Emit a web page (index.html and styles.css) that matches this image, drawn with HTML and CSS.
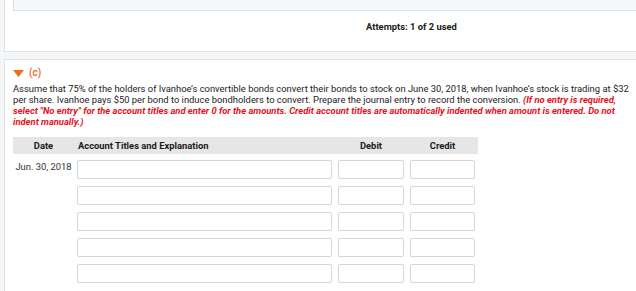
FILE: index.html
```html
<!DOCTYPE html>
<html lang="en">
<head>
  <meta charset="UTF-8">
  <title>Journal Entry</title>
  <link rel="stylesheet" href="styles.css">
</head>
<body>

  <div class="card card-top">
    <div class="prev-box"></div>
    <div class="attempts">Attempts: 1 of 2 used</div>
  </div>

  <div class="card">
    <div class="part-head">
      <svg class="caret" width="11" height="7" viewBox="0 0 11 7"><polygon points="0,0 11,0 5.5,7" fill="#ef6c1f"/></svg>
      <span class="part-label">(c)</span>
    </div>
    <p class="question">
      Assume that 75% of the holders of Ivanhoe’s convertible bonds convert their bonds to stock on June 30, 2018, when Ivanhoe’s stock is trading at $32 per share. Ivanhoe pays $50 per bond to induce bondholders to convert. Prepare the journal entry to record the conversion.
      <span class="note">(If no entry is required, select "No entry" for the account titles and enter 0 for the amounts. Credit account titles are automatically indented when amount is entered. Do not indent manually.)</span>
    </p>

    <div class="journal">
      <div class="jrow jhead">
        <div class="c-date">Date</div>
        <div class="c-title">Account Titles and Explanation</div>
        <div class="c-debit">Debit</div>
        <div class="c-credit">Credit</div>
      </div>
      <div class="jrow">
        <div class="c-date date-val">Jun. 30, 2018</div>
        <input class="c-title" type="text">
        <input class="c-debit" type="text">
        <input class="c-credit" type="text">
      </div>
      <div class="jrow">
        <div class="c-date"></div>
        <input class="c-title" type="text">
        <input class="c-debit" type="text">
        <input class="c-credit" type="text">
      </div>
      <div class="jrow">
        <div class="c-date"></div>
        <input class="c-title" type="text">
        <input class="c-debit" type="text">
        <input class="c-credit" type="text">
      </div>
      <div class="jrow">
        <div class="c-date"></div>
        <input class="c-title" type="text">
        <input class="c-debit" type="text">
        <input class="c-credit" type="text">
      </div>
      <div class="jrow">
        <div class="c-date"></div>
        <input class="c-title" type="text">
        <input class="c-debit" type="text">
        <input class="c-credit" type="text">
      </div>
    </div>
  </div>

</body>
</html>
```

FILE: styles.css
```css
body {
  margin: 0;
  background-color: #f3f5f7;
  font-family: Roboto, "Liberation Sans", sans-serif;
  font-size: 9.4px;
  color: #222;
  overflow: hidden;
}

.card {
  margin-left: 4px;
  padding-left: 8px;
  background-color: white;
  border: 1px solid #dde2e7;
  border-right: none;
}

.card-top {
  border-top: none;
}

.prev-box {
  height: 10px;
  background-color: #f5f8fa;
  border-left: 1px solid #dde2e7;
  border-bottom: 1px solid #dde2e7;
}

.attempts {
  height: 30px;
  padding: 10px 0 0 353px;
  line-height: 12px;
  font-weight: bold;
  color: #1a1a1a;
}

.card-top + .card {
  margin-top: 7px;
  padding-top: 7px;
  height: 260px;
}

.part-head {
  display: flex;
  align-items: center;
  height: 12px;
  line-height: 12px;
}

.caret {
  margin-top: 1px;
}

.part-label {
  margin-left: 5px;
  color: #e8661d;
  font-size: 10px;
  font-weight: 500;
}

.question {
  margin: 4px 0 0;
  padding-right: 2px;
  line-height: 11px;
}

.note {
  color: #e3131b;
  font-weight: bold;
  font-style: italic;
}

.journal {
  margin-top: 10px;
  width: 465px;
}

.jrow {
  display: flex;
  align-items: flex-start;
  margin-bottom: 7px;
}

.jhead {
  height: 17px;
  margin-bottom: 6px;
  align-items: center;
  background-color: #e6e6e6;
  font-weight: bold;
  color: #1a1a1a;
}

.c-date {
  width: 61px;
  text-align: center;
}

.c-title {
  width: 255px;
  margin-left: 3px;
}

.jhead .c-title {
  padding-left: 1px;
  width: 254px;
}

.c-debit {
  width: 66px;
  margin-left: 6px;
  text-align: center;
}

.c-credit {
  width: 65px;
  margin-left: 6px;
  text-align: center;
}

.date-val {
  padding-top: 1px;
  line-height: 11px;
  color: #333;
}

input {
  box-sizing: border-box;
  height: 19px;
  padding: 2px 4px;
  border: 1px solid #d6d6d6;
  border-radius: 2px;
  background-color: white;
  font: inherit;
}
```
